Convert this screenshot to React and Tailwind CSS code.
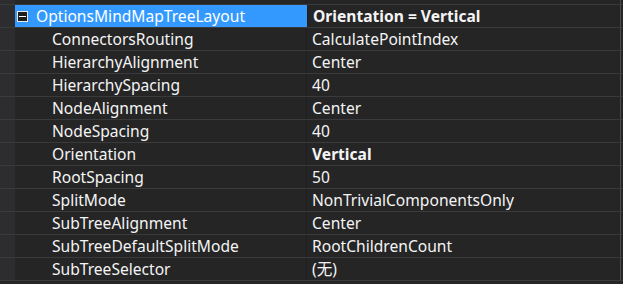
import React from "react";

const rows = [
  { name: "ConnectorsRouting", value: "CalculatePointIndex" },
  { name: "HierarchyAlignment", value: "Center" },
  { name: "HierarchySpacing", value: "40" },
  { name: "NodeAlignment", value: "Center" },
  { name: "NodeSpacing", value: "40" },
  { name: "Orientation", value: "Vertical", bold: true },
  { name: "RootSpacing", value: "50" },
  { name: "SplitMode", value: "NonTrivialComponentsOnly" },
  { name: "SubTreeAlignment", value: "Center" },
  { name: "SubTreeDefaultSplitMode", value: "RootChildrenCount" },
  { name: "SubTreeSelector", value: "(无)" },
];

const PropRow = ({ name, value, bold }) => (
  <div className="flex h-[23px] shrink-0 border-b border-[#3a3a3d]">
    <div className="w-[15px] shrink-0 bg-[#2d2d30]" />
    <div className="w-[292px] shrink-0 flex items-center pt-[2px] pl-[37px] border-r border-[#1e1e1e]">
      {name}
    </div>
    <div className={"flex-1 flex items-center pt-[2px] pl-[5px] border-r border-[#4a4a4e]" + (bold ? " font-bold" : "")}>
      {value}
    </div>
    <div className="w-[2px] shrink-0" />
  </div>
);

export default function App() {
  return (
    <div
      className="w-[623px] h-[284px] overflow-hidden bg-[#252526] text-[#f4f4f4] text-[15.6px] flex flex-col"
      style={{ fontFamily: '"Noto Sans", "Noto Sans CJK SC", sans-serif' }}
    >
      <div className="flex h-[5px] shrink-0 border-b border-[#3a3a3d]">
        <div className="w-[15px] shrink-0 bg-[#2d2d30]" />
        <div className="w-[292px] shrink-0 border-r border-[#1e1e1e]" />
        <div className="flex-1 border-r border-[#4a4a4e]" />
        <div className="w-[2px] shrink-0" />
      </div>
      <div className="flex h-[23px] shrink-0 border-b border-[#3a3a3d]">
        <div className="w-[15px] shrink-0 bg-[#2d2d30]" />
        <div className="w-[292px] shrink-0 flex items-center bg-[#3399ff] text-white">
          <div className="ml-[2px] w-[11px] h-[11px] border border-[#e8e8e8] bg-[#1e1e1e] flex items-center justify-center">
            <div className="w-[7px] h-[1px] bg-white" />
          </div>
          <span className="ml-[8px] pt-[2px]">OptionsMindMapTreeLayout</span>
        </div>
        <div className="flex-1 flex items-center pt-[2px] pl-[5px] font-bold border-l border-[#1e1e1e] border-r border-r-[#4a4a4e]">
          Orientation = Vertical
        </div>
        <div className="w-[2px] shrink-0" />
      </div>
      {rows.map((r) => (
        <PropRow key={r.name} {...r} />
      ))}
    </div>
  );
}
